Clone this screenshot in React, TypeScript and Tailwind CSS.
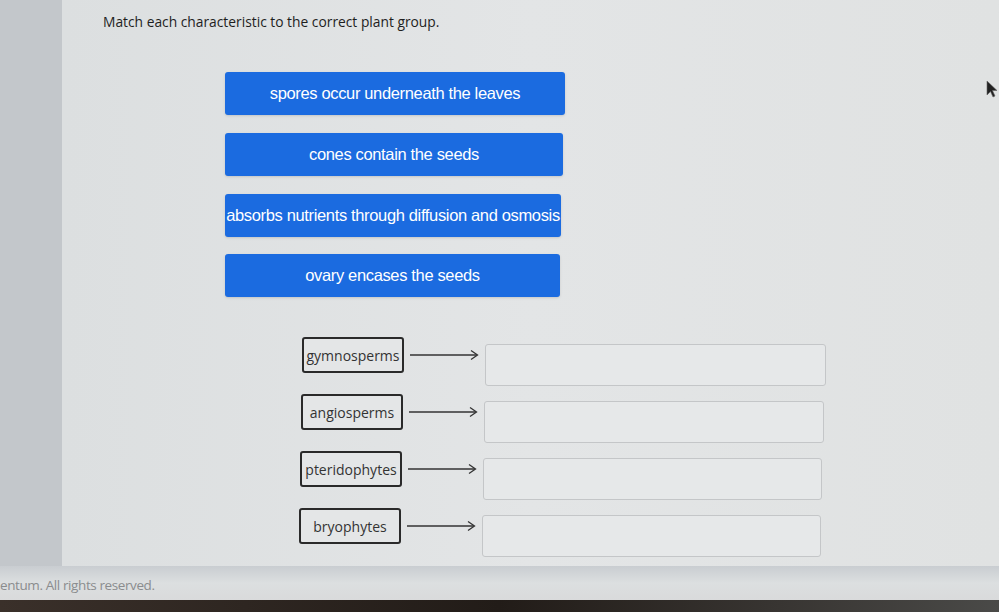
import React from "react";

const blue = [
  { t: "spores occur underneath the leaves", w: "w-[340px]", mt: "mt-[40px]" },
  { t: "cones contain the seeds", w: "w-[338px]", mt: "mt-[18px]" },
  { t: "absorbs nutrients through diffusion and osmosis", w: "w-[336px]", mt: "mt-[18px]" },
  { t: "ovary encases the seeds", w: "w-[335px]", mt: "mt-[17px]" },
];

const rows = [
  { l: "gymnosperms", x: "ml-[240px]", lw: "w-[102px]", dw: "w-[341px]" },
  { l: "angiosperms", x: "ml-[239px]", lw: "w-[102px]", dw: "w-[340px]" },
  { l: "pteridophytes", x: "ml-[238px]", lw: "w-[102px]", dw: "w-[339px]" },
  { l: "bryophytes", x: "ml-[237px]", lw: "w-[102px]", dw: "w-[339px]" },
];

function Arrow() {
  return (
    <svg width="70" height="12" viewBox="0 0 70 12" className="shrink-0">
      <line x1="0" y1="6" x2="67" y2="6" stroke="#333" strokeWidth="1.3" />
      <polyline points="61,1.5 67.5,6 61,10.5" fill="none" stroke="#333" strokeWidth="1.3" />
    </svg>
  );
}

export default function App() {
  return (
    <div className="w-[999px] h-[612px] overflow-hidden relative flex flex-col bg-[#dfe2e3]" style={{ fontFamily: "'Open Sans', sans-serif" }}>
      <div className="flex h-[566px]">
        <div className="w-[62px] shrink-0 bg-[#c3c7cb]" />
        <div className="flex-1 flex flex-col bg-gradient-to-r from-[#dcdfe0] via-[#e3e5e6] to-[#e0e2e2]">
          <div className="ml-[41px] mt-[12px] text-[13.8px] text-[#1e1e1e] leading-[20px]">
            Match each characteristic to the correct plant group.
          </div>
          <div className="ml-[163px] flex flex-col">
            {blue.map((b) => (
              <div
                key={b.t}
                className={`${b.w} ${b.mt} h-[43px] rounded-[3px] bg-[#1b6be0] text-white flex items-center justify-center text-[16.5px] tracking-[-0.35px] shadow-sm`}
                style={{ fontFamily: "'Liberation Sans', Arial, sans-serif" }}
              >
                {b.t}
              </div>
            ))}
          </div>
          <div className="flex flex-col mt-[40px] gap-[8px]">
            {rows.map((r) => (
              <div key={r.l} className={`flex items-start ${r.x}`}>
                <div className={`${r.lw} h-[36px] shrink-0 border-2 border-[#2a2a2a] rounded-[3px] flex items-center justify-center text-[14px] text-[#333] bg-[#e4e6e7]`}>
                  {r.l}
                </div>
                <div className="ml-[6px] mt-[12px]">
                  <Arrow />
                </div>
                <div className={`${r.dw} ml-[5px] mt-[7px] h-[42px] border border-[#c4c6c8] rounded-[3px] bg-[#e6e8e9]`} />
              </div>
            ))}
          </div>
        </div>
      </div>
      <div className="h-[34px] relative bg-gradient-to-b from-[#c9cdd1] via-[#dcdfe0] to-[#d9dadb] flex items-end pb-[5px]">
        <span className="text-[13.5px] text-[#8a8c8e] tracking-[-0.4px]">entum. All rights reserved.</span>
      </div>
      <div className="h-[12px] bg-gradient-to-r from-[#3a302a] via-[#221c18] to-[#4a4a48]" />
      <svg className="absolute left-[986px] top-[80px]" width="12" height="18" viewBox="0 0 12 18">
        <polygon points="1,1 1,15 4.5,11.5 7,17 9,16 6.5,10.5 11,10.5" fill="#222" stroke="#666" strokeWidth="0.6" />
      </svg>
    </div>
  );
}
